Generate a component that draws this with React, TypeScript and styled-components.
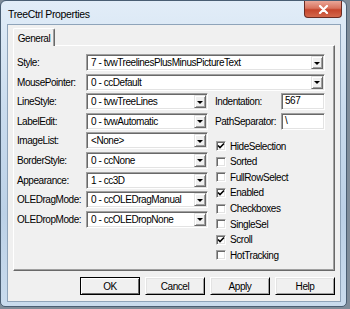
import React from 'react';
import styled, { createGlobalStyle } from 'styled-components';

/**
 * Global
 */
const GlobalStyle = createGlobalStyle`
    html, body {
        margin: 0;
        padding: 0;
        background: #7f8c99;
    }
    body {
        width: 350px;
        height: 309px;
        overflow: hidden;
        font-family: "Liberation Sans", Arial, sans-serif;
        font-size: 10px;
        letter-spacing: -0.45px;
        color: #000;
    }
`;

/**
 * Styled Components
 */
const Window = styled.div`
    box-sizing: border-box;
    width: 347px;
    height: 307px;
    display: flex;
    flex-direction: column;
    border: 1px solid #4a5e73;
    border-radius: 6px 6px 5px 5px;
    background: linear-gradient(180deg, #e2edf8 0%, #cadcee 35%, #bcd1e7 70%, #c9dbed 100%);
    padding: 0 5px 4px 6px;
`;

const TitleBar = styled.div`
    height: 23px;
    display: flex;
    align-items: flex-start;
    justify-content: space-between;
`;

const Title = styled.div`
    padding: 7px 0 0 1px;
    font-size: 10.5px;
    letter-spacing: -0.35px;
    color: #000;
`;

const CloseButton = styled.div`
    width: 38px;
    height: 17px;
    margin-right: -1px;
    box-sizing: border-box;
    border: 1px solid #6a2b22;
    border-top: none;
    border-radius: 0 0 4px 4px;
    background: linear-gradient(180deg, #eaa798 0%, #d8735e 45%, #c5452c 55%, #d3674b 100%);
    display: flex;
    align-items: center;
    justify-content: center;
`;

const Client = styled.div`
    flex: 1;
    display: flex;
    flex-direction: column;
    background: #f0f0f0;
    border: 1px solid #8fa4ba;
    padding: 3px 5px 6px 5px;
`;

const TabStrip = styled.div`
    display: flex;
    height: 18px;
    position: relative;
    z-index: 1;
`;

const Tab = styled.div`
    box-sizing: border-box;
    width: 42px;
    height: 18px;
    padding-top: 4px;
    text-align: center;
    background: #f0f0f0;
    border-top: 1px solid #fff;
    border-left: 1px solid #fff;
    border-right: 1px solid #696969;
    box-shadow: inset -1px 0 0 #a0a0a0;
    border-radius: 2px 2px 0 0;
`;

const TabPage = styled.div`
    box-sizing: border-box;
    height: 226px;
    margin-top: -1px;
    border-top: 1px solid #fff;
    border-left: 1px solid #fff;
    border-right: 1px solid #696969;
    border-bottom: 1px solid #696969;
    box-shadow: inset -1px -1px 0 #a0a0a0;
    padding: 8px 9px 0 3px;
    display: flex;
    flex-direction: column;
    gap: 2.6px;
`;

const Row = styled.div`
    display: flex;
    align-items: center;
    height: 17px;
`;

const Label = styled.div<{ $width?: number }>`
    width: ${(p) => (p.$width ? `${p.$width}px` : 'auto')};
    flex: ${(p) => (p.$width ? 'none' : '1')};
    white-space: nowrap;
`;

const Combo = styled.div<{ $width?: number }>`
    box-sizing: border-box;
    height: 17px;
    width: ${(p) => (p.$width ? `${p.$width}px` : 'auto')};
    flex: ${(p) => (p.$width ? 'none' : '1')};
    display: flex;
    align-items: center;
    background: #fff;
    border-top: 1px solid #a0a0a0;
    border-left: 1px solid #a0a0a0;
    border-right: 1px solid #fff;
    border-bottom: 1px solid #fff;
    box-shadow: inset 1px 1px 0 #696969, inset -1px -1px 0 #e3e3e3;
    padding: 1px;
`;

const ComboText = styled.div`
    flex: 1;
    padding-left: 3px;
    white-space: nowrap;
    overflow: hidden;
`;

const DropButton = styled.div`
    box-sizing: border-box;
    width: 12px;
    height: 13px;
    background: #f0f0f0;
    border-top: 1px solid #e3e3e3;
    border-left: 1px solid #e3e3e3;
    border-right: 1px solid #696969;
    border-bottom: 1px solid #696969;
    box-shadow: inset 1px 1px 0 #fff, inset -1px -1px 0 #a0a0a0;
    display: flex;
    align-items: center;
    justify-content: center;
`;

const Arrow = styled.div`
    width: 0;
    height: 0;
    border-left: 3px solid transparent;
    border-right: 3px solid transparent;
    border-top: 3px solid #000;
    margin-top: 1px;
`;

const Body = styled.div`
    display: flex;
`;

const LeftCol = styled.div`
    display: flex;
    flex-direction: column;
    gap: 2.6px;
`;

const RightCol = styled.div`
    flex: 1;
    margin-left: 7px;
    display: flex;
    flex-direction: column;
    gap: 2.6px;
`;

const TextBox = styled.div`
    box-sizing: border-box;
    width: 44px;
    height: 17px;
    background: #fff;
    border-top: 1px solid #a0a0a0;
    border-left: 1px solid #a0a0a0;
    border-right: 1px solid #fff;
    border-bottom: 1px solid #fff;
    box-shadow: inset 1px 1px 0 #696969, inset -1px -1px 0 #e3e3e3;
    padding: 1px 0 0 3px;
`;

const CheckList = styled.div`
    margin-top: 6px;
    display: flex;
    flex-direction: column;
`;

const CheckRow = styled.div`
    height: 15.6px;
    display: flex;
    align-items: center;
    padding-left: 1px;
`;

const CheckBox = styled.div`
    box-sizing: border-box;
    width: 10px;
    height: 10px;
    margin-right: 4px;
    background: #fff;
    border-top: 1px solid #a0a0a0;
    border-left: 1px solid #a0a0a0;
    border-right: 1px solid #fff;
    border-bottom: 1px solid #fff;
    box-shadow: inset 1px 1px 0 #696969, inset -1px -1px 0 #e3e3e3;
    display: flex;
    align-items: center;
    justify-content: center;
`;

const ButtonRow = styled.div`
    margin-top: 6px;
    display: flex;
    justify-content: flex-end;
    gap: 5px;
`;

const Button = styled.div<{ $default?: boolean }>`
    box-sizing: border-box;
    width: 60px;
    height: 18px;
    display: flex;
    align-items: center;
    justify-content: center;
    background: #f0f0f0;
    border: 1px solid ${(p) => (p.$default ? '#000' : 'transparent')};
    border-top-color: ${(p) => (p.$default ? '#000' : '#fff')};
    border-left-color: ${(p) => (p.$default ? '#000' : '#fff')};
    border-right-color: #000;
    border-bottom-color: #000;
    box-shadow: ${(p) =>
        p.$default
            ? 'inset 1px 1px 0 #fff, inset -1px -1px 0 #696969'
            : 'inset 1px 1px 0 #e3e3e3, inset -1px -1px 0 #a0a0a0'};
`;

/**
 * Data
 */
const leftRows = [
    ['LineStyle:', '0 - tvwTreeLines'],
    ['LabelEdit:', '0 - tvwAutomatic'],
    ['ImageList:', '<None>'],
    ['BorderStyle:', '0 - ccNone'],
    ['Appearance:', '1 - cc3D'],
    ['OLEDragMode:', '0 - ccOLEDragManual'],
    ['OLEDropMode:', '0 - ccOLEDropNone'],
];

const checks: [string, boolean][] = [
    ['HideSelection', true],
    ['Sorted', false],
    ['FullRowSelect', false],
    ['Enabled', true],
    ['Checkboxes', false],
    ['SingleSel', false],
    ['Scroll', true],
    ['HotTracking', false],
];

const ComboField = ({ value, width }: { value: string; width?: number }) => (
    <Combo $width={width}>
        <ComboText>{value}</ComboText>
        <DropButton>
            <Arrow />
        </DropButton>
    </Combo>
);

const Check = () => (
    <svg width="8" height="8" viewBox="0 0 8 8">
        <path d="M1 3.5 L3 5.5 L7 1.5" stroke="#000" strokeWidth="1.6" fill="none" />
    </svg>
);

/**
 * Main Component
 */
const App = () => {
    return (
        <>
            <GlobalStyle />
            <Window>
                <TitleBar>
                    <Title>TreeCtrl Properties</Title>
                    <CloseButton>
                        <svg width="11" height="9" viewBox="0 0 11 9">
                            <path d="M2 1 L9 8 M9 1 L2 8" stroke="#fff" strokeWidth="2.2" strokeLinecap="round" />
                        </svg>
                    </CloseButton>
                </TitleBar>
                <Client>
                    <TabStrip>
                        <Tab>General</Tab>
                    </TabStrip>
                    <TabPage>
                        <Row>
                            <Label $width={69}>Style:</Label>
                            <ComboField value="7 - tvwTreelinesPlusMinusPictureText" />
                        </Row>
                        <Row>
                            <Label $width={69}>MousePointer:</Label>
                            <ComboField value="0 - ccDefault" />
                        </Row>
                        <Body>
                            <LeftCol>
                                {leftRows.map(([label, value]) => (
                                    <Row key={label}>
                                        <Label $width={69}>{label}</Label>
                                        <ComboField value={value} width={122} />
                                    </Row>
                                ))}
                            </LeftCol>
                            <RightCol>
                                <Row>
                                    <Label>Indentation:</Label>
                                    <TextBox>567</TextBox>
                                </Row>
                                <Row>
                                    <Label>PathSeparator:</Label>
                                    <TextBox>\</TextBox>
                                </Row>
                                <CheckList>
                                    {checks.map(([label, on]) => (
                                        <CheckRow key={label}>
                                            <CheckBox>{on && <Check />}</CheckBox>
                                            {label}
                                        </CheckRow>
                                    ))}
                                </CheckList>
                            </RightCol>
                        </Body>
                    </TabPage>
                    <ButtonRow>
                        <Button $default>OK</Button>
                        <Button>Cancel</Button>
                        <Button>Apply</Button>
                        <Button>Help</Button>
                    </ButtonRow>
                </Client>
            </Window>
        </>
    );
};

export default App;
